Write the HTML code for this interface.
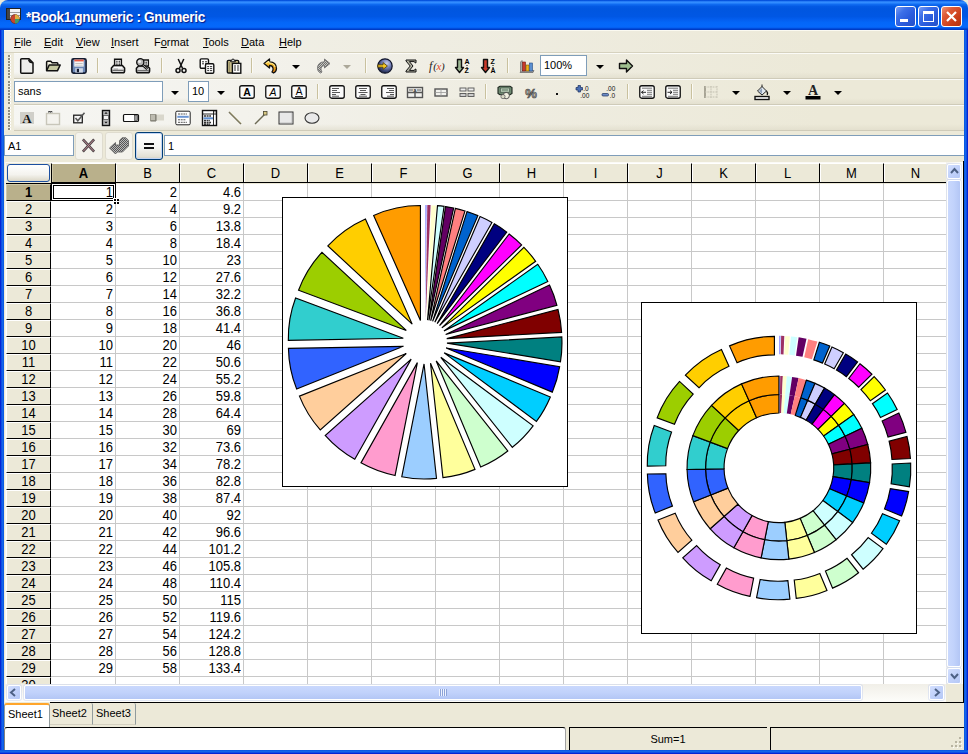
<!DOCTYPE html><html><head><meta charset="utf-8"><title>*Book1.gnumeric : Gnumeric</title><style>
*{box-sizing:border-box;margin:0;padding:0}
html,body{width:968px;height:754px;overflow:hidden;background:#ece9d8}
body{position:relative;font-family:"Liberation Sans","DejaVu Sans",sans-serif;font-size:11px;color:#000}
.a{position:absolute}
#title{left:0;top:0;width:968px;height:30px;border-radius:8px 8px 0 0;
 background:linear-gradient(to bottom,#0046d2 0%,#0b5fe9 3%,#3a92ff 6.5%,#2a86fe 10%,#0f6af0 15%,#0359e3 22%,#0056e0 30%,#0057e4 55%,#035ff0 66%,#0467f9 76%,#0568fb 88%,#0560f2 92%,#004cdc 95%,#003cc6 98%,#0038c0 100%)}
#title .t{left:26px;top:9px;color:#fff;font-weight:bold;font-size:13.6px;line-height:16px;white-space:nowrap;text-shadow:1px 1px 1px #0a1883;letter-spacing:-0.32px;transform:scaleY(1.08);transform-origin:50% 20%}
.bl,.br,.bb{z-index:20}
.bl{left:0;top:30px;width:4px;height:724px;background:linear-gradient(to right,#0019cf 0,#0831d9 25%,#166aee 50%,#0855dd 100%)}
.br{left:964px;top:30px;width:4px;height:724px;background:linear-gradient(to left,#0019cf 0,#0831d9 25%,#166aee 50%,#0855dd 100%)}
.bb{left:0;top:750px;width:968px;height:4px;background:linear-gradient(to top,#0019cf 0,#0831d9 25%,#166aee 50%,#0855dd 100%)}
.wb{top:6px;width:21px;height:21px;border:1px solid #fff;border-radius:3px;background:linear-gradient(135deg,#7a9df5 0%,#3c6fe8 30%,#2b5cdd 60%,#2450c8 100%)}
.wb.x{background:linear-gradient(135deg,#ec9277 0%,#de5a36 30%,#c93c18 70%,#b23312 100%)}
#menu{left:4px;top:30px;width:960px;height:23px;background:linear-gradient(to right,#f2f1e9 0%,#efede2 45%,#ece9d8 85%);border-top:1px solid #fbfaf1;border-bottom:1px solid #d6d2bf}
#menu span{margin-top:-1px}
#menu span{position:absolute;top:6px;font-size:11px;white-space:nowrap}
#menu u{text-decoration:underline}
.tb{left:4px;width:960px;height:26px;background:linear-gradient(to right,#f6f6f3 0%,#f3f2ec 25%,#efede2 50%,#ece9d8 85%);border-top:1px solid #fbfbf7;border-bottom:1px solid #cfcbb9}
.tb i{position:absolute;left:0;top:-1px;width:10px;height:26px;background:#eeebdb}
.tb b{position:absolute;left:0;top:18px;width:960px;height:6px;background:linear-gradient(to bottom,rgba(220,216,198,0),rgba(220,216,198,.55))}
.hd{left:8px;width:3px;background-image:linear-gradient(to right,#8f8d80 0,#8f8d80 2px,transparent 2px),linear-gradient(to right,transparent 1px,#fff 1px);background-size:3px 3px,3px 3px;background-position:0 0,0 1px;background-repeat:repeat-y}
.hd:before{content:"";position:absolute;left:0;top:0;width:3px;height:100%;background-image:linear-gradient(to bottom,transparent 2px,#eeebdb 2px);background-size:3px 3px}
.sep{width:2px;height:16px;border-left:1px solid #c5c2b2;border-right:1px solid #fff}
.ent{background:#fff;border:1px solid #7f9db9}
.ent span{position:absolute;white-space:nowrap}
.dar{width:0;height:0;border-left:4px solid transparent;border-right:4px solid transparent;border-top:4px solid #000}
.dar.g{border-top-color:#aca899}
svg{position:absolute;overflow:visible}
#grid{left:5px;top:162px;width:942px;height:522px;background:#fff;overflow:hidden}
.ch,.rh{position:absolute;background:#ece9d8;text-align:center;font-size:13px;color:#000;overflow:hidden}
.ch span,.rh span{display:inline-block;transform:scaleY(1.1);transform-origin:50% 85%}
.cell{position:absolute;font-size:13px;text-align:right;white-space:nowrap;transform:scaleY(1.1);transform-origin:50% 15%}
</style></head><body>
<div id="title" class="a">
<svg style="left:6px;top:8px" width="16" height="16" viewBox="0 0 16 16"><rect x="0.5" y="0.5" width="14" height="11" fill="#f4f4f4" stroke="#222"/><rect x="1" y="1" width="3" height="10" fill="#444"/><rect x="4" y="4" width="10" height="1" fill="#999"/><rect x="4" y="7" width="10" height="1" fill="#999"/><circle cx="9" cy="11" r="4.5" fill="#c9452e" stroke="#5a2a1a" stroke-width=".6"/><path d="M9 11 L13.5 11 A4.5 4.5 0 0 1 9 15.5Z" fill="#3d9a6a"/><path d="M9 11 L9 6.5 A4.5 4.5 0 0 1 13.5 11Z" fill="#e0b040"/></svg>
<div class="a t">*Book1.gnumeric : Gnumeric</div>
<div class="a wb" style="left:895px"><div class="a" style="left:4px;top:12px;width:8px;height:3px;background:#fff"></div></div>
<div class="a wb" style="left:918px"><div class="a" style="left:4px;top:4px;width:11px;height:11px;border:1px solid #fff;border-top:3px solid #fff"></div></div>
<div class="a wb x" style="left:941px"><svg style="left:4px;top:4px" width="11" height="11" viewBox="0 0 11 11"><path d="M1 1L10 10M10 1L1 10" stroke="#fff" stroke-width="2.2"/></svg></div>
</div>
<div class="a bl"></div><div class="a br"></div><div class="a bb"></div>
<div id="menu" class="a">
<span style="left:10px"><u>F</u>ile</span>
<span style="left:40px"><u>E</u>dit</span>
<span style="left:72px"><u>V</u>iew</span>
<span style="left:107px"><u>I</u>nsert</span>
<span style="left:150px">F<u>o</u>rmat</span>
<span style="left:199px"><u>T</u>ools</span>
<span style="left:237px"><u>D</u>ata</span>
<span style="left:275px"><u>H</u>elp</span>
</div>
<div class="a tb" style="top:53px"><b></b><i></i></div>
<div class="a hd" style="top:55px;height:24px"></div>
<div class="a tb" style="top:79px"><b></b><i></i></div>
<div class="a hd" style="top:81px;height:24px"></div>
<div class="a tb" style="top:105px"><b></b><i></i></div>
<div class="a hd" style="top:107px;height:24px"></div>
<svg style="left:19px;top:58px" width="16" height="16" viewBox="0 0 16 16"><g stroke-width="1.4"><path d="M2.7 0.8H10L14 4.8V14.2Q14 15.2 13 15.2H2.7Q1.7 15.2 1.7 14.2V1.8Q1.7 .8 2.7 .8Z" fill="#f1f1ef" stroke="#111" stroke-width="1.5" stroke-linejoin="round"/><path d="M9.5 1.5Q10.5 4.8 13.5 5.2" fill="none" stroke="#111" stroke-width="1.6"/><path d="M3 2H9L9.5 4.5L13 5.5V14H3Z" fill="#ededeb" stroke="none"/></g></svg>
<svg style="left:45px;top:58px" width="16" height="16" viewBox="0 0 16 16"><g stroke-width="1.4"><path d="M1.6 12.5V4.2Q1.6 3.2 2.6 3.2H5.8L7.2 4.8H12Q12.8 4.8 12.8 5.6V6.8" fill="#f1efdd" stroke="#111" stroke-width="1.5" stroke-linejoin="round"/><path d="M1.6 12.8L4.2 7H15.2L12.4 12.8Z" fill="#c5c8a0" stroke="#111" stroke-width="1.5" stroke-linejoin="round"/></g></svg>
<svg style="left:71px;top:58px" width="16" height="16" viewBox="0 0 16 16"><g stroke-width="1.4"><rect x="0.9" y="0.9" width="14.2" height="14.2" rx="1.6" fill="#6c88b6" stroke="#141c30" stroke-width="1.6"/><rect x="3.3" y="1.6" width="9.4" height="7" fill="#f4f4f4"/><rect x="3.3" y="1.6" width="9.4" height="1.8" fill="#e85a44"/><rect x="4.3" y="5" width="7.4" height=".8" fill="#b4b4b4"/><rect x="4.3" y="6.8" width="7.4" height=".8" fill="#c8c8c8"/><rect x="4.3" y="10.2" width="7.6" height="4.4" fill="#cfd8e8"/><rect x="5.8" y="10.8" width="2.2" height="3.4" fill="#141c30"/></g></svg>
<svg style="left:110px;top:58px" width="16" height="16" viewBox="0 0 16 16"><g stroke-width="1.4"><path d="M4.6 8V1.3H11.4V8" fill="#fff" stroke="#111" stroke-width="1.4"/><path d="M6.2 3.3H7.6M8.6 3.3H10M6.2 5H7.6M8.6 5H10M6.2 6.7H7.6M8.6 6.7H10" stroke="#111" stroke-width="1.1"/><path d="M1.4 13V10L3.6 7.6H12.4L14.6 10V13Q14.6 14.8 12.8 14.8H3.2Q1.4 14.8 1.4 13Z" fill="#dedede" stroke="#111" stroke-width="1.5"/><path d="M2.2 12.4H13.8" stroke="#6f6f6f" stroke-width="1.3"/><path d="M4 9.8H12" stroke="#fff"/><path d="M4.5 11H5.5M6.5 11H7.5" stroke="#444" stroke-width=".8"/></g></svg>
<svg style="left:135px;top:58px" width="16" height="16" viewBox="0 0 16 16"><g stroke-width="1.4"><path d="M8.5 8V2H13.4V8" fill="#fff" stroke="#111" stroke-width="1.3"/><path d="M10.3 4.2H12M10.3 6H12" stroke="#111" stroke-width="1"/><path d="M1.4 13V10.3L3.6 8H12.4L14.6 10.3V13Q14.6 14.8 12.8 14.8H3.2Q1.4 14.8 1.4 13Z" fill="#d4d4d4" stroke="#111" stroke-width="1.5"/><path d="M2.2 12.6H13.8" stroke="#6f6f6f" stroke-width="1.3"/><path d="M4.5 11H5.5M6.5 11H7.5" stroke="#fff" stroke-width=".9"/><path d="M7.5 6.8L12.3 11" stroke="#111" stroke-width="2.6"/><path d="M7.8 7L12 10.7" stroke="#999" stroke-width="1"/><circle cx="5.3" cy="4.3" r="3.6" fill="#b4b4b4" stroke="#111" stroke-width="1.3"/><circle cx="4.5" cy="3.5" r="1.6" fill="#ececec"/></g></svg>
<svg style="left:172.5px;top:58px" width="16" height="16" viewBox="0 0 16 16"><g stroke-width="1.4"><path d="M5.2 1L9.6 10.5M10.8 1L6.4 10.5" stroke="#111" stroke-width="1.5" fill="none"/><circle cx="5" cy="12.6" r="2" fill="none" stroke="#111" stroke-width="1.5"/><circle cx="11" cy="12.6" r="2" fill="none" stroke="#111" stroke-width="1.5"/></g></svg>
<svg style="left:198.5px;top:58px" width="16" height="16" viewBox="0 0 16 16"><g stroke-width="1.4"><rect x="1.2" y="0.9" width="8.3" height="9.4" rx="1.2" fill="#fff" stroke="#111" stroke-width="1.4"/><path d="M3 3.8H5M6 3.8H8M3 5.8H5M6 5.8H8" stroke="#333" stroke-width="1"/><rect x="6.5" y="5.8" width="8.3" height="9.4" rx="1.2" fill="#fff" stroke="#111" stroke-width="1.4"/><path d="M8.2 8.6H10.2M11 8.6H13.2M8.2 10.6H10.2M11 10.6H13.2M8.2 12.6H10.2M11 12.6H13.2" stroke="#333" stroke-width="1"/></g></svg>
<svg style="left:225.5px;top:58px" width="16" height="16" viewBox="0 0 16 16"><g stroke-width="1.4"><rect x="1.3" y="2.4" width="11.4" height="12.6" rx="1.2" fill="#c8bc8a" stroke="#111" stroke-width="1.4"/><path d="M3.3 4V14" stroke="#8a8056" stroke-width="1.4"/><path d="M3.3 4.5V13.5" stroke="#e9e0b8" stroke-width=".5" stroke-dasharray="1 1"/><path d="M4.6 3.8L5.4 2Q7 -.2 8.6 2L9.4 3.8Z" fill="#cfcfcf" stroke="#111" stroke-width="1"/><rect x="6.4" y="5.4" width="8.4" height="9.8" fill="#fff" stroke="#111" stroke-width="1.4"/><path d="M8 8H10M11 8H13.2M8 10H10M11 10H13.2M8 12H10M11 12H13.2" stroke="#333" stroke-width="1"/></g></svg>
<svg style="left:262px;top:58px" width="16" height="16" viewBox="0 0 16 16"><g stroke-width="1.4"><defs><linearGradient id="ug" x1="0" y1="0" x2="0" y2="1"><stop offset="0" stop-color="#fde466"/><stop offset=".45" stop-color="#f3b322"/><stop offset="1" stop-color="#d97a10"/></linearGradient></defs><path d="M2 5.5L7.5 1V3.8Q14.5 4 14.5 10.5Q14.5 13.5 11.5 15L10 14Q11.5 12 11 10Q10.5 7.6 7.5 7.5V10Z" fill="url(#ug)" stroke="#111" stroke-width="1.3" stroke-linejoin="round"/><path d="M4 5.3L7 3.2V5Q12.3 5 13 9" fill="none" stroke="#fff3b0" stroke-width=".9"/></g></svg>
<svg style="left:315px;top:58px" width="16" height="16" viewBox="0 0 16 16"><g stroke-width="1.4"><defs><pattern id="dth2" width="2" height="2" patternUnits="userSpaceOnUse"><rect width="2" height="2" fill="#c6c6c0"/><rect width="1" height="1" fill="#6e6e6e"/><rect x="1" y="1" width="1" height="1" fill="#6e6e6e"/></pattern></defs><path d="M15 5.5L9.5 1V3.8Q2.5 4 2.5 10.5Q2.5 13.5 5.5 15L7 14Q5.5 12 6 10Q6.5 7.6 9.5 7.5V10Z" fill="url(#dth2)" stroke="#777" stroke-width="1" stroke-linejoin="round"/></g></svg>
<svg style="left:376.5px;top:58px" width="16" height="16" viewBox="0 0 16 16"><g stroke-width="1.4"><defs><radialGradient id="gl" cx=".62" cy=".32" r=".75"><stop offset="0" stop-color="#c9d0ec"/><stop offset=".35" stop-color="#7f8abf"/><stop offset=".7" stop-color="#3d4878"/><stop offset="1" stop-color="#161b33"/></radialGradient></defs><circle cx="8" cy="8" r="7.2" fill="url(#gl)" stroke="#10142a" stroke-width="1.2"/><path d="M.8 6.8H6V4.6L10.4 8L6 11.4V9.2H.8Z" fill="#f4c624" stroke="#4a3a06" stroke-width=".8" stroke-linejoin="round"/></g></svg>
<svg style="left:402.5px;top:58px" width="16" height="16" viewBox="0 0 16 16"><g stroke-width="1.4"><path d="M3 2H13V4.8H12L11.4 3.6H6.4L10 8L6.4 12.4H11.4L12 11.2H13V14H3V13L7.2 8L3 3Z" fill="#b4b4a4" stroke="#111" stroke-width="1" stroke-linejoin="round"/></g></svg>
<svg style="left:429px;top:58px" width="16" height="16" viewBox="0 0 16 16"><g stroke-width="1.4"><text x="0" y="12" font-family="Liberation Serif,serif" font-style="italic" font-size="12" fill="#222">f</text><text x="4.2" y="12" font-family="Liberation Serif,serif" font-style="italic" font-size="11" fill="#222">(</text><text x="7.4" y="12" font-family="Liberation Serif,serif" font-style="italic" font-size="11" fill="#e2442c">x</text><text x="12" y="12" font-family="Liberation Serif,serif" font-style="italic" font-size="11" fill="#222">)</text></g></svg>
<svg style="left:455px;top:58px" width="16" height="16" viewBox="0 0 16 16"><g stroke-width="1.4"><path d="M2.5 1.5H6.5V9.5H8.5L4.5 14.5L0.5 9.5H2.5Z" fill="#9db894" stroke="#111" stroke-linejoin="round"/><text x="9.5" y="6" font-family="Liberation Sans,sans-serif" font-weight="bold" font-size="7" fill="#000">A</text><text x="9.5" y="15" font-family="Liberation Sans,sans-serif" font-weight="bold" font-size="7" fill="#000">Z</text><rect x="11.5" y="7" width="1" height="1" fill="#000"/><rect x="11.5" y="9" width="1" height="1" fill="#000"/></g></svg>
<svg style="left:481px;top:58px" width="16" height="16" viewBox="0 0 16 16"><g stroke-width="1.4"><path d="M2.5 1.5H6.5V9.5H8.5L4.5 14.5L0.5 9.5H2.5Z" fill="#c8392b" stroke="#111" stroke-linejoin="round"/><text x="9.5" y="6" font-family="Liberation Sans,sans-serif" font-weight="bold" font-size="7" fill="#000">Z</text><text x="9.5" y="15" font-family="Liberation Sans,sans-serif" font-weight="bold" font-size="7" fill="#000">A</text><rect x="11.5" y="7" width="1" height="1" fill="#000"/><rect x="11.5" y="9" width="1" height="1" fill="#000"/></g></svg>
<svg style="left:518.5px;top:58px" width="16" height="16" viewBox="0 0 16 16"><g stroke-width="1.4"><path d="M1 14.5L3 12.5H15L14 14.5Z" fill="#9c9c9c" stroke="#555" stroke-width=".6"/><path d="M1.5 14V4L3 2.5V12.5" fill="#ccc" stroke="#666" stroke-width=".7"/><rect x="3.5" y="4" width="3" height="9" fill="#c8392b" stroke="#6b1a12" stroke-width=".6"/><rect x="7" y="7" width="3" height="6" fill="#f0b41c" stroke="#7c5a08" stroke-width=".6"/><rect x="10.5" y="5" width="3" height="8" fill="#5b8fd0" stroke="#234a82" stroke-width=".6"/></g></svg>
<svg style="left:617.5px;top:58px" width="16" height="16" viewBox="0 0 16 16"><g stroke-width="1.4"><path d="M1.5 5.5H8.5V2L14.5 8L8.5 14V10.5H1.5Z" fill="#9fbf8f" stroke="#111" stroke-linejoin="round"/></g></svg>
<div class="a" style="left:97px;top:58px;width:2px;height:15px;border-left:1px solid #c9c19e;border-right:1px solid #fbfaf5"></div>
<div class="a" style="left:161px;top:58px;width:2px;height:15px;border-left:1px solid #c9c19e;border-right:1px solid #fbfaf5"></div>
<div class="a" style="left:251px;top:58px;width:2px;height:15px;border-left:1px solid #c9c19e;border-right:1px solid #fbfaf5"></div>
<div class="a" style="left:365px;top:58px;width:2px;height:15px;border-left:1px solid #c9c19e;border-right:1px solid #fbfaf5"></div>
<div class="a" style="left:507px;top:58px;width:2px;height:15px;border-left:1px solid #c9c19e;border-right:1px solid #fbfaf5"></div>
<div class="a dar" style="left:292px;top:65px"></div>
<div class="a dar g" style="left:343px;top:65px"></div>
<div class="a dar" style="left:596px;top:65px"></div>
<div class="a ent" style="left:540px;top:55px;width:47px;height:21px"><span style="left:3px;top:3px">100%</span></div>
<div class="a ent" style="left:14px;top:81px;width:149px;height:21px"><span style="left:3px;top:3px">sans</span></div>
<div class="a dar" style="left:171px;top:91px"></div>
<div class="a ent" style="left:188px;top:81px;width:21px;height:21px"><span style="left:3px;top:3px">10</span></div>
<div class="a dar" style="left:217px;top:91px"></div>
<svg style="left:239px;top:84px" width="16" height="16" viewBox="0 0 16 16"><g stroke-width="1.4"><rect x="0.75" y="1.75" width="14.5" height="12.5" rx="2" fill="#fbfbfb" stroke="#111" stroke-width="1.3"/><text x="8" y="12" text-anchor="middle" font-family="Liberation Sans,sans-serif" font-weight="bold" font-size="10.5" fill="#000">A</text></g></svg>
<svg style="left:265px;top:84px" width="16" height="16" viewBox="0 0 16 16"><g stroke-width="1.4"><rect x="0.75" y="1.75" width="14.5" height="12.5" rx="2" fill="#fbfbfb" stroke="#111" stroke-width="1.3"/><text x="8" y="12" text-anchor="middle" font-family="Liberation Sans,sans-serif" font-style="italic" font-size="10.5" fill="#000">A</text></g></svg>
<svg style="left:291px;top:84px" width="16" height="16" viewBox="0 0 16 16"><g stroke-width="1.4"><rect x="0.75" y="1.75" width="14.5" height="12.5" rx="2" fill="#fbfbfb" stroke="#111" stroke-width="1.3"/><text x="8" y="11.3" text-anchor="middle" font-family="Liberation Sans,sans-serif" font-size="10" fill="#000">A</text><path d="M4 12.7H12" stroke="#000" stroke-width="1"/></g></svg>
<svg style="left:329px;top:84px" width="16" height="16" viewBox="0 0 16 16"><g stroke-width="1.4"><rect x="0.75" y="1.75" width="14.5" height="12.5" rx="2" fill="#fbfbfb" stroke="#111" stroke-width="1.3"/><path d="M3 4.5H10M3 6.5H8M3 8.5H11M3 10.5H7M3 12.2H10" stroke="#444" stroke-width=".9"/></g></svg>
<svg style="left:355px;top:84px" width="16" height="16" viewBox="0 0 16 16"><g stroke-width="1.4"><rect x="0.75" y="1.75" width="14.5" height="12.5" rx="2" fill="#fbfbfb" stroke="#111" stroke-width="1.3"/><path d="M4 4.5H12M5 6.5H11M3.5 8.5H12.5M5.5 10.5H10.5M4 12.2H12" stroke="#444" stroke-width=".9"/></g></svg>
<svg style="left:381px;top:84px" width="16" height="16" viewBox="0 0 16 16"><g stroke-width="1.4"><rect x="0.75" y="1.75" width="14.5" height="12.5" rx="2" fill="#fbfbfb" stroke="#111" stroke-width="1.3"/><path d="M6 4.5H13M8 6.5H13M5 8.5H13M9 10.5H13M6 12.2H13" stroke="#444" stroke-width=".9"/></g></svg>
<svg style="left:407px;top:84px" width="16" height="16" viewBox="0 0 16 16"><g stroke-width="1.4"><rect x="0.5" y="3.5" width="15" height="10" fill="#f2f2ee" stroke="#555"/><path d="M.5 8.5H15.5M8 8.5V13.5" stroke="#555"/><path d="M2 6H6M10 6H14" stroke="#333" stroke-width=".8"/><text x="8" y="7.8" text-anchor="middle" font-family="Liberation Sans,sans-serif" font-weight="bold" font-size="5" fill="#222">a</text></g></svg>
<svg style="left:432.5px;top:84px" width="16" height="16" viewBox="0 0 16 16"><g stroke-width="1.4"><rect x="2" y="5" width="12" height="7" fill="#f2f2ee" stroke="#555"/><path d="M2 8.5H14M8 5V12" stroke="#999" stroke-width=".8"/></g></svg>
<svg style="left:459px;top:84px" width="16" height="16" viewBox="0 0 16 16"><g stroke-width="1.4"><rect x="1" y="4" width="6" height="3" fill="#eee" stroke="#555" stroke-width=".9"/><rect x="9" y="4" width="6" height="3" fill="#eee" stroke="#555" stroke-width=".9"/><rect x="1" y="9.5" width="6" height="3" fill="#ccc" stroke="#555" stroke-width=".9"/><rect x="9" y="9.5" width="6" height="3" fill="#ccc" stroke="#555" stroke-width=".9"/></g></svg>
<svg style="left:496.5px;top:84px" width="16" height="16" viewBox="0 0 16 16"><g stroke-width="1.4"><path d="M1 3.5L3 2.2H13L15 3.5V9.5L13 10.8H3L1 9.5Z" fill="#6f8a72" stroke="#1c261e" stroke-width="1.1"/><rect x="3.3" y="4" width="9.4" height="4.2" fill="#b4c8b2" stroke="#3a4c3e" stroke-width=".6"/><path d="M5 6H11" stroke="#5d7762" stroke-width="1"/><circle cx="9.2" cy="11.6" r="3.2" fill="#f0f0e0" stroke="#444" stroke-width=".9"/><circle cx="6" cy="12.6" r="2.1" fill="#dadac6" stroke="#555" stroke-width=".7"/></g></svg>
<svg style="left:522.5px;top:84px" width="16" height="16" viewBox="0 0 16 16"><g stroke-width="1.4"><text x="8" y="13.5" text-anchor="middle" font-family="Liberation Sans,sans-serif" font-weight="bold" font-size="13" fill="#d0d0c4" stroke="#444" stroke-width=".7">%</text></g></svg>
<svg style="left:548.5px;top:84px" width="16" height="16" viewBox="0 0 16 16"><g stroke-width="1.4"><rect x="7" y="9" width="2" height="2" fill="#111"/></g></svg>
<svg style="left:575px;top:84px" width="16" height="16" viewBox="0 0 16 16"><g stroke-width="1.4"><path d="M3 1.5H5.5V3.5H7.5V6H5.5V8H3V6H1V3.5H3Z" fill="#4a6fb4" stroke="#1b2f5c" stroke-width=".7"/><text x="8.2" y="7" font-family="Liberation Sans,sans-serif" font-size="6.5" fill="#111">.0</text><text x="5.3" y="14" font-family="Liberation Sans,sans-serif" font-size="6.5" fill="#111">.00</text></g></svg>
<svg style="left:600.5px;top:84px" width="16" height="16" viewBox="0 0 16 16"><g stroke-width="1.4"><rect x="1" y="9.5" width="6.5" height="2.5" rx="1" fill="#6d8cc6" stroke="#1b2f5c" stroke-width=".7"/><text x="5.3" y="6.5" font-family="Liberation Sans,sans-serif" font-size="6.5" fill="#111">.00</text><text x="8.8" y="14" font-family="Liberation Sans,sans-serif" font-size="6.5" fill="#111">.0</text></g></svg>
<svg style="left:639px;top:84px" width="16" height="16" viewBox="0 0 16 16"><g stroke-width="1.4"><rect x="0.75" y="1.75" width="14.5" height="12.5" rx="2" fill="#fbfbfb" stroke="#111" stroke-width="1.3"/><path d="M3 4.2H13M8 6.3H13M8 8.3H13M8 10.3H13M3 12.3H13" stroke="#555" stroke-width=".8"/><path d="M2.5 8.3H7M2.5 8.3L4.5 6.6M2.5 8.3L4.5 10" stroke="#111" stroke-width=".9" fill="none"/></g></svg>
<svg style="left:665px;top:84px" width="16" height="16" viewBox="0 0 16 16"><g stroke-width="1.4"><rect x="0.75" y="1.75" width="14.5" height="12.5" rx="2" fill="#fbfbfb" stroke="#111" stroke-width="1.3"/><path d="M3 4.2H13M8 6.3H13M8 8.3H13M8 10.3H13M3 12.3H13" stroke="#555" stroke-width=".8"/><path d="M2.5 8.3H7M7 8.3L5 6.6M7 8.3L5 10" stroke="#111" stroke-width=".9" fill="none"/></g></svg>
<svg style="left:703px;top:84px" width="16" height="16" viewBox="0 0 16 16"><g stroke-width="1.4"><path d="M2 2V14" stroke="#a8a596" stroke-width="2"/><path d="M2 3H14M2 8H14M2 13H14M8 2V14M14 2V14" stroke="#c2bfb0" stroke-width="1" stroke-dasharray="1 .6"/></g></svg>
<svg style="left:754px;top:84px" width="16" height="16" viewBox="0 0 16 16"><g stroke-width="1.4"><path d="M8 0.5V5" stroke="#111" stroke-width=".9"/><path d="M8 2.5L12.5 7L8 11L3.5 7Z" fill="#dfe6ee" stroke="#111" stroke-width=".9"/><path d="M5 7L8 4L8 10Z" fill="#8ea0b8"/><path d="M12.5 7Q14 8.5 13.2 11" fill="none" stroke="#111" stroke-width="1.2"/><rect x="1" y="12.5" width="14" height="3" fill="#fff" stroke="#111"/></g></svg>
<svg style="left:805px;top:84px" width="16" height="16" viewBox="0 0 16 16"><g stroke-width="1.4"><text x="8" y="11" text-anchor="middle" font-family="Liberation Serif,serif" font-weight="bold" font-size="14" fill="#222">A</text><rect x="0.5" y="12" width="15" height="3.5" fill="#000"/></g></svg>
<div class="a" style="left:317px;top:84px;width:2px;height:15px;border-left:1px solid #c9c19e;border-right:1px solid #fbfaf5"></div>
<div class="a" style="left:485px;top:84px;width:2px;height:15px;border-left:1px solid #c9c19e;border-right:1px solid #fbfaf5"></div>
<div class="a" style="left:627px;top:84px;width:2px;height:15px;border-left:1px solid #c9c19e;border-right:1px solid #fbfaf5"></div>
<div class="a" style="left:691px;top:84px;width:2px;height:15px;border-left:1px solid #c9c19e;border-right:1px solid #fbfaf5"></div>
<div class="a dar" style="left:732px;top:91px"></div>
<div class="a dar" style="left:783px;top:91px"></div>
<div class="a dar" style="left:834px;top:91px"></div>
<svg style="left:19px;top:110px" width="16" height="16" viewBox="0 0 16 16"><g stroke-width="1.4"><rect x="1" y="2" width="14" height="12" fill="#d0cfc9"/><text x="8" y="13" text-anchor="middle" font-family="Liberation Serif,serif" font-weight="bold" font-size="13" fill="#111">A</text></g></svg>
<svg style="left:45px;top:110px" width="16" height="16" viewBox="0 0 16 16"><g stroke-width="1.4"><rect x="1.5" y="3.5" width="13" height="11" fill="#f4f3ee" stroke="#c8c6ba"/><path d="M3.5 2.5V1.5H5V2.5M5.5 2.5V1.5H7V2.5" stroke="#222" stroke-width=".8" fill="none"/></g></svg>
<svg style="left:71px;top:110px" width="16" height="16" viewBox="0 0 16 16"><g stroke-width="1.4"><rect x="2.7" y="5.2" width="8.6" height="7.6" fill="#f6f6f6" stroke="#222" stroke-width="1.3"/><path d="M4.5 8L6.8 10.8L13.5 2.8" fill="none" stroke="#555" stroke-width="1.5"/></g></svg>
<svg style="left:97.5px;top:110px" width="16" height="16" viewBox="0 0 16 16"><g stroke-width="1.4"><rect x="4.5" y="0.5" width="7" height="15" fill="#bdbdbd" stroke="#111"/><rect x="5.5" y="5.5" width="5" height="4" fill="#f4f4f4" stroke="#444" stroke-width=".7"/><path d="M6.3 3.8L8 2L9.7 3.8Z M6.3 11.7L8 13.5L9.7 11.7Z" fill="#111"/></g></svg>
<svg style="left:122.5px;top:110px" width="16" height="16" viewBox="0 0 16 16"><g stroke-width="1.4"><rect x="0.5" y="4.5" width="15" height="7" rx="1" fill="#fff" stroke="#111" stroke-width="1.2"/><rect x="11.5" y="5.5" width="3" height="5" fill="#999" stroke="#333" stroke-width=".6"/></g></svg>
<svg style="left:149px;top:110px" width="16" height="16" viewBox="0 0 16 16"><g stroke-width="1.4"><rect x="1" y="4.5" width="14" height="6" fill="#d9d7cc"/><rect x="1.5" y="4.5" width="5" height="6" fill="#bdbbb0" stroke="#8e8c80" stroke-width=".8"/><path d="M1.5 11H7V4.5" fill="none" stroke="#77756a" stroke-width="1"/></g></svg>
<svg style="left:175px;top:110px" width="16" height="16" viewBox="0 0 16 16"><g stroke-width="1.4"><rect x="0.8" y="1.2" width="14.4" height="13.6" rx="1.2" fill="#fff" stroke="#222" stroke-width="1"/><path d="M3 4H12M3 9.8H11M3 12.3H12" stroke="#555" stroke-width="1" stroke-dasharray="2 .7"/><rect x="2.3" y="5.8" width="11.4" height="2" fill="#6a95d4"/></g></svg>
<svg style="left:201px;top:110px" width="16" height="16" viewBox="0 0 16 16"><g stroke-width="1.4"><rect x="1.5" y="0.5" width="14" height="15" fill="#fff" stroke="#111"/><path d="M1.5 4H15.5M12.5 .5V15.5" stroke="#111" stroke-width=".9"/><path d="M3 6H10M3 10.5H9M3 12.5H10M3 14.3H9" stroke="#333" stroke-dasharray="2 .6"/><rect x="2.5" y="7.3" width="9.5" height="2" fill="#5f8fd0"/><path d="M13.2 1.5L14 2.8L14.8 1.5Z" fill="#111"/></g></svg>
<svg style="left:227px;top:110px" width="16" height="16" viewBox="0 0 16 16"><g stroke-width="1.4"><path d="M2 2L14 14" stroke="#6d6a55" stroke-width="1.5"/><path d="M2.5 1.8L14.2 13.5" stroke="#c8bf8e" stroke-width=".6"/></g></svg>
<svg style="left:253px;top:110px" width="16" height="16" viewBox="0 0 16 16"><g stroke-width="1.4"><path d="M2 14L12 4" stroke="#6d6a55" stroke-width="1.5"/><rect x="10.5" y="1.5" width="3.5" height="3.5" fill="#d8c884" stroke="#4a4630" stroke-width=".8"/></g></svg>
<svg style="left:278px;top:110px" width="16" height="16" viewBox="0 0 16 16"><g stroke-width="1.4"><rect x="1" y="2" width="14" height="12" fill="#e8e8e8" stroke="#333" stroke-width="1"/><path d="M2 13.2H14.2V3" fill="none" stroke="#9a9a9a" stroke-width=".8"/></g></svg>
<svg style="left:304px;top:110px" width="16" height="16" viewBox="0 0 16 16"><g stroke-width="1.4"><ellipse cx="8" cy="8" rx="7" ry="5.3" fill="#e9e9e9" stroke="#333" stroke-width="1.1"/></g></svg>
<div class="a" style="left:4px;top:131px;width:960px;height:31px;background:#ece9d8"></div>
<div class="a ent" style="left:4px;top:135px;width:70px;height:21px"><span style="left:3px;top:4px">A1</span></div>
<div class="a ent" style="left:164px;top:135px;width:803px;height:21px"><span style="left:3px;top:4px">1</span></div>
<div class="a" style="left:75px;top:132px;width:28px;height:28px;border:1px solid #dfdccf;border-radius:3px;background:#f4f3ec"><svg style="left:5px;top:5px" width="15" height="15" viewBox="0 0 16 16"><path d="M2 1.5L14 14.5M14 1.5L2 14.5" stroke="#4e4648" stroke-width="2.8"/><path d="M2.5 2L13.5 14M13.5 2L2.5 14" stroke="#c08a94" stroke-width="1"/></svg></div>
<div class="a" style="left:105px;top:132px;width:28px;height:28px;border:1px solid #dfdccf;border-radius:3px;background:#f4f3ec"><svg style="left:3px;top:4px" width="20" height="18" viewBox="0 0 20 18"><defs><pattern id="dth" width="2" height="2" patternUnits="userSpaceOnUse"><rect width="2" height="2" fill="#b8b8b8"/><rect width="1" height="1" fill="#555"/><rect x="1" y="1" width="1" height="1" fill="#555"/></pattern></defs><path d="M0.5 11L6.5 5.5V8H10.5V3.5L13 .8H17L19.5 3.5V9L13.5 15H8L6.5 17Z" fill="url(#dth)" stroke="#666" stroke-width=".9"/></svg></div>
<div class="a" style="left:135px;top:132px;width:28px;height:28px;border:1px solid #003c74;border-radius:3px;background:linear-gradient(to bottom,#fff 0%,#f6f6f2 55%,#e3e1d6 90%,#d0cdbf 100%);box-shadow:inset 0 0 0 1px #c2d5f5"><div class="a" style="left:8px;top:10px;width:10px;height:2px;background:#111"></div><div class="a" style="left:8px;top:14px;width:10px;height:2px;background:#111"></div></div>
<div id="grid" class="a">
<div class="a" style="left:0;top:0;width:942px;height:22px;background:#ece9d8"></div>
<div class="a" style="left:0;top:0;width:46px;height:523px;background:#ece9d8"></div>
<div class="a" style="left:110px;top:21px;width:1px;height:502px;background:#c8c8c8"></div>
<div class="a" style="left:174px;top:21px;width:1px;height:502px;background:#c8c8c8"></div>
<div class="a" style="left:238px;top:21px;width:1px;height:502px;background:#c8c8c8"></div>
<div class="a" style="left:302px;top:21px;width:1px;height:502px;background:#c8c8c8"></div>
<div class="a" style="left:366px;top:21px;width:1px;height:502px;background:#c8c8c8"></div>
<div class="a" style="left:430px;top:21px;width:1px;height:502px;background:#c8c8c8"></div>
<div class="a" style="left:494px;top:21px;width:1px;height:502px;background:#c8c8c8"></div>
<div class="a" style="left:558px;top:21px;width:1px;height:502px;background:#c8c8c8"></div>
<div class="a" style="left:622px;top:21px;width:1px;height:502px;background:#c8c8c8"></div>
<div class="a" style="left:686px;top:21px;width:1px;height:502px;background:#c8c8c8"></div>
<div class="a" style="left:750px;top:21px;width:1px;height:502px;background:#c8c8c8"></div>
<div class="a" style="left:814px;top:21px;width:1px;height:502px;background:#c8c8c8"></div>
<div class="a" style="left:878px;top:21px;width:1px;height:502px;background:#c8c8c8"></div>
<div class="a" style="left:942px;top:21px;width:1px;height:502px;background:#c8c8c8"></div>
<div class="a" style="left:46px;top:38px;width:895px;height:1px;background:#c8c8c8"></div>
<div class="a" style="left:46px;top:55px;width:895px;height:1px;background:#c8c8c8"></div>
<div class="a" style="left:46px;top:72px;width:895px;height:1px;background:#c8c8c8"></div>
<div class="a" style="left:46px;top:89px;width:895px;height:1px;background:#c8c8c8"></div>
<div class="a" style="left:46px;top:106px;width:895px;height:1px;background:#c8c8c8"></div>
<div class="a" style="left:46px;top:123px;width:895px;height:1px;background:#c8c8c8"></div>
<div class="a" style="left:46px;top:140px;width:895px;height:1px;background:#c8c8c8"></div>
<div class="a" style="left:46px;top:157px;width:895px;height:1px;background:#c8c8c8"></div>
<div class="a" style="left:46px;top:174px;width:895px;height:1px;background:#c8c8c8"></div>
<div class="a" style="left:46px;top:191px;width:895px;height:1px;background:#c8c8c8"></div>
<div class="a" style="left:46px;top:208px;width:895px;height:1px;background:#c8c8c8"></div>
<div class="a" style="left:46px;top:225px;width:895px;height:1px;background:#c8c8c8"></div>
<div class="a" style="left:46px;top:242px;width:895px;height:1px;background:#c8c8c8"></div>
<div class="a" style="left:46px;top:259px;width:895px;height:1px;background:#c8c8c8"></div>
<div class="a" style="left:46px;top:276px;width:895px;height:1px;background:#c8c8c8"></div>
<div class="a" style="left:46px;top:293px;width:895px;height:1px;background:#c8c8c8"></div>
<div class="a" style="left:46px;top:310px;width:895px;height:1px;background:#c8c8c8"></div>
<div class="a" style="left:46px;top:327px;width:895px;height:1px;background:#c8c8c8"></div>
<div class="a" style="left:46px;top:344px;width:895px;height:1px;background:#c8c8c8"></div>
<div class="a" style="left:46px;top:361px;width:895px;height:1px;background:#c8c8c8"></div>
<div class="a" style="left:46px;top:378px;width:895px;height:1px;background:#c8c8c8"></div>
<div class="a" style="left:46px;top:395px;width:895px;height:1px;background:#c8c8c8"></div>
<div class="a" style="left:46px;top:412px;width:895px;height:1px;background:#c8c8c8"></div>
<div class="a" style="left:46px;top:429px;width:895px;height:1px;background:#c8c8c8"></div>
<div class="a" style="left:46px;top:446px;width:895px;height:1px;background:#c8c8c8"></div>
<div class="a" style="left:46px;top:463px;width:895px;height:1px;background:#c8c8c8"></div>
<div class="a" style="left:46px;top:480px;width:895px;height:1px;background:#c8c8c8"></div>
<div class="a" style="left:46px;top:497px;width:895px;height:1px;background:#c8c8c8"></div>
<div class="a" style="left:46px;top:514px;width:895px;height:1px;background:#c8c8c8"></div>
<div class="a" style="left:46px;top:531px;width:895px;height:1px;background:#c8c8c8"></div>
<div class="ch" style="left:46px;top:1px;width:64px;height:20px;background:#b9b08b;font-weight:bold;border-left:1px solid #000;border-bottom:1px solid #000;border-top:1px solid #fff;line-height:19px"><span>A</span></div>
<div class="ch" style="left:110px;top:1px;width:64px;height:20px;background:#ece9d8;font-weight:normal;border-left:1px solid #000;border-bottom:1px solid #000;border-top:1px solid #fff;line-height:19px"><span>B</span></div>
<div class="ch" style="left:174px;top:1px;width:64px;height:20px;background:#ece9d8;font-weight:normal;border-left:1px solid #000;border-bottom:1px solid #000;border-top:1px solid #fff;line-height:19px"><span>C</span></div>
<div class="ch" style="left:238px;top:1px;width:64px;height:20px;background:#ece9d8;font-weight:normal;border-left:1px solid #000;border-bottom:1px solid #000;border-top:1px solid #fff;line-height:19px"><span>D</span></div>
<div class="ch" style="left:302px;top:1px;width:64px;height:20px;background:#ece9d8;font-weight:normal;border-left:1px solid #000;border-bottom:1px solid #000;border-top:1px solid #fff;line-height:19px"><span>E</span></div>
<div class="ch" style="left:366px;top:1px;width:64px;height:20px;background:#ece9d8;font-weight:normal;border-left:1px solid #000;border-bottom:1px solid #000;border-top:1px solid #fff;line-height:19px"><span>F</span></div>
<div class="ch" style="left:430px;top:1px;width:64px;height:20px;background:#ece9d8;font-weight:normal;border-left:1px solid #000;border-bottom:1px solid #000;border-top:1px solid #fff;line-height:19px"><span>G</span></div>
<div class="ch" style="left:494px;top:1px;width:64px;height:20px;background:#ece9d8;font-weight:normal;border-left:1px solid #000;border-bottom:1px solid #000;border-top:1px solid #fff;line-height:19px"><span>H</span></div>
<div class="ch" style="left:558px;top:1px;width:64px;height:20px;background:#ece9d8;font-weight:normal;border-left:1px solid #000;border-bottom:1px solid #000;border-top:1px solid #fff;line-height:19px"><span>I</span></div>
<div class="ch" style="left:622px;top:1px;width:64px;height:20px;background:#ece9d8;font-weight:normal;border-left:1px solid #000;border-bottom:1px solid #000;border-top:1px solid #fff;line-height:19px"><span>J</span></div>
<div class="ch" style="left:686px;top:1px;width:64px;height:20px;background:#ece9d8;font-weight:normal;border-left:1px solid #000;border-bottom:1px solid #000;border-top:1px solid #fff;line-height:19px"><span>K</span></div>
<div class="ch" style="left:750px;top:1px;width:64px;height:20px;background:#ece9d8;font-weight:normal;border-left:1px solid #000;border-bottom:1px solid #000;border-top:1px solid #fff;line-height:19px"><span>L</span></div>
<div class="ch" style="left:814px;top:1px;width:64px;height:20px;background:#ece9d8;font-weight:normal;border-left:1px solid #000;border-bottom:1px solid #000;border-top:1px solid #fff;line-height:19px"><span>M</span></div>
<div class="ch" style="left:878px;top:1px;width:64px;height:20px;background:#ece9d8;font-weight:normal;border-left:1px solid #000;border-bottom:1px solid #000;border-top:1px solid #fff;line-height:19px"><span>N</span></div>
<div class="a" style="left:47px;top:3px;width:1px;height:17px;background:#d0c9a8"></div>
<div class="a" style="left:111px;top:3px;width:1px;height:17px;background:#fff"></div>
<div class="a" style="left:175px;top:3px;width:1px;height:17px;background:#fff"></div>
<div class="a" style="left:239px;top:3px;width:1px;height:17px;background:#fff"></div>
<div class="a" style="left:303px;top:3px;width:1px;height:17px;background:#fff"></div>
<div class="a" style="left:367px;top:3px;width:1px;height:17px;background:#fff"></div>
<div class="a" style="left:431px;top:3px;width:1px;height:17px;background:#fff"></div>
<div class="a" style="left:495px;top:3px;width:1px;height:17px;background:#fff"></div>
<div class="a" style="left:559px;top:3px;width:1px;height:17px;background:#fff"></div>
<div class="a" style="left:623px;top:3px;width:1px;height:17px;background:#fff"></div>
<div class="a" style="left:687px;top:3px;width:1px;height:17px;background:#fff"></div>
<div class="a" style="left:751px;top:3px;width:1px;height:17px;background:#fff"></div>
<div class="a" style="left:815px;top:3px;width:1px;height:17px;background:#fff"></div>
<div class="a" style="left:879px;top:3px;width:1px;height:17px;background:#fff"></div>
<div class="rh" style="left:1px;top:22px;width:45px;height:17px;background:#b9b08b;font-weight:bold;border-right:1px solid #000;border-bottom:1px solid #000;border-top:1px solid #d0c9a8;border-left:1px solid #d0c9a8;line-height:15px"><span>1</span></div>
<div class="rh" style="left:1px;top:39px;width:45px;height:17px;background:#ece9d8;font-weight:normal;border-right:1px solid #000;border-bottom:1px solid #000;border-top:1px solid #fff;border-left:1px solid #fff;line-height:15px"><span>2</span></div>
<div class="rh" style="left:1px;top:56px;width:45px;height:17px;background:#ece9d8;font-weight:normal;border-right:1px solid #000;border-bottom:1px solid #000;border-top:1px solid #fff;border-left:1px solid #fff;line-height:15px"><span>3</span></div>
<div class="rh" style="left:1px;top:73px;width:45px;height:17px;background:#ece9d8;font-weight:normal;border-right:1px solid #000;border-bottom:1px solid #000;border-top:1px solid #fff;border-left:1px solid #fff;line-height:15px"><span>4</span></div>
<div class="rh" style="left:1px;top:90px;width:45px;height:17px;background:#ece9d8;font-weight:normal;border-right:1px solid #000;border-bottom:1px solid #000;border-top:1px solid #fff;border-left:1px solid #fff;line-height:15px"><span>5</span></div>
<div class="rh" style="left:1px;top:107px;width:45px;height:17px;background:#ece9d8;font-weight:normal;border-right:1px solid #000;border-bottom:1px solid #000;border-top:1px solid #fff;border-left:1px solid #fff;line-height:15px"><span>6</span></div>
<div class="rh" style="left:1px;top:124px;width:45px;height:17px;background:#ece9d8;font-weight:normal;border-right:1px solid #000;border-bottom:1px solid #000;border-top:1px solid #fff;border-left:1px solid #fff;line-height:15px"><span>7</span></div>
<div class="rh" style="left:1px;top:141px;width:45px;height:17px;background:#ece9d8;font-weight:normal;border-right:1px solid #000;border-bottom:1px solid #000;border-top:1px solid #fff;border-left:1px solid #fff;line-height:15px"><span>8</span></div>
<div class="rh" style="left:1px;top:158px;width:45px;height:17px;background:#ece9d8;font-weight:normal;border-right:1px solid #000;border-bottom:1px solid #000;border-top:1px solid #fff;border-left:1px solid #fff;line-height:15px"><span>9</span></div>
<div class="rh" style="left:1px;top:175px;width:45px;height:17px;background:#ece9d8;font-weight:normal;border-right:1px solid #000;border-bottom:1px solid #000;border-top:1px solid #fff;border-left:1px solid #fff;line-height:15px"><span>10</span></div>
<div class="rh" style="left:1px;top:192px;width:45px;height:17px;background:#ece9d8;font-weight:normal;border-right:1px solid #000;border-bottom:1px solid #000;border-top:1px solid #fff;border-left:1px solid #fff;line-height:15px"><span>11</span></div>
<div class="rh" style="left:1px;top:209px;width:45px;height:17px;background:#ece9d8;font-weight:normal;border-right:1px solid #000;border-bottom:1px solid #000;border-top:1px solid #fff;border-left:1px solid #fff;line-height:15px"><span>12</span></div>
<div class="rh" style="left:1px;top:226px;width:45px;height:17px;background:#ece9d8;font-weight:normal;border-right:1px solid #000;border-bottom:1px solid #000;border-top:1px solid #fff;border-left:1px solid #fff;line-height:15px"><span>13</span></div>
<div class="rh" style="left:1px;top:243px;width:45px;height:17px;background:#ece9d8;font-weight:normal;border-right:1px solid #000;border-bottom:1px solid #000;border-top:1px solid #fff;border-left:1px solid #fff;line-height:15px"><span>14</span></div>
<div class="rh" style="left:1px;top:260px;width:45px;height:17px;background:#ece9d8;font-weight:normal;border-right:1px solid #000;border-bottom:1px solid #000;border-top:1px solid #fff;border-left:1px solid #fff;line-height:15px"><span>15</span></div>
<div class="rh" style="left:1px;top:277px;width:45px;height:17px;background:#ece9d8;font-weight:normal;border-right:1px solid #000;border-bottom:1px solid #000;border-top:1px solid #fff;border-left:1px solid #fff;line-height:15px"><span>16</span></div>
<div class="rh" style="left:1px;top:294px;width:45px;height:17px;background:#ece9d8;font-weight:normal;border-right:1px solid #000;border-bottom:1px solid #000;border-top:1px solid #fff;border-left:1px solid #fff;line-height:15px"><span>17</span></div>
<div class="rh" style="left:1px;top:311px;width:45px;height:17px;background:#ece9d8;font-weight:normal;border-right:1px solid #000;border-bottom:1px solid #000;border-top:1px solid #fff;border-left:1px solid #fff;line-height:15px"><span>18</span></div>
<div class="rh" style="left:1px;top:328px;width:45px;height:17px;background:#ece9d8;font-weight:normal;border-right:1px solid #000;border-bottom:1px solid #000;border-top:1px solid #fff;border-left:1px solid #fff;line-height:15px"><span>19</span></div>
<div class="rh" style="left:1px;top:345px;width:45px;height:17px;background:#ece9d8;font-weight:normal;border-right:1px solid #000;border-bottom:1px solid #000;border-top:1px solid #fff;border-left:1px solid #fff;line-height:15px"><span>20</span></div>
<div class="rh" style="left:1px;top:362px;width:45px;height:17px;background:#ece9d8;font-weight:normal;border-right:1px solid #000;border-bottom:1px solid #000;border-top:1px solid #fff;border-left:1px solid #fff;line-height:15px"><span>21</span></div>
<div class="rh" style="left:1px;top:379px;width:45px;height:17px;background:#ece9d8;font-weight:normal;border-right:1px solid #000;border-bottom:1px solid #000;border-top:1px solid #fff;border-left:1px solid #fff;line-height:15px"><span>22</span></div>
<div class="rh" style="left:1px;top:396px;width:45px;height:17px;background:#ece9d8;font-weight:normal;border-right:1px solid #000;border-bottom:1px solid #000;border-top:1px solid #fff;border-left:1px solid #fff;line-height:15px"><span>23</span></div>
<div class="rh" style="left:1px;top:413px;width:45px;height:17px;background:#ece9d8;font-weight:normal;border-right:1px solid #000;border-bottom:1px solid #000;border-top:1px solid #fff;border-left:1px solid #fff;line-height:15px"><span>24</span></div>
<div class="rh" style="left:1px;top:430px;width:45px;height:17px;background:#ece9d8;font-weight:normal;border-right:1px solid #000;border-bottom:1px solid #000;border-top:1px solid #fff;border-left:1px solid #fff;line-height:15px"><span>25</span></div>
<div class="rh" style="left:1px;top:447px;width:45px;height:17px;background:#ece9d8;font-weight:normal;border-right:1px solid #000;border-bottom:1px solid #000;border-top:1px solid #fff;border-left:1px solid #fff;line-height:15px"><span>26</span></div>
<div class="rh" style="left:1px;top:464px;width:45px;height:17px;background:#ece9d8;font-weight:normal;border-right:1px solid #000;border-bottom:1px solid #000;border-top:1px solid #fff;border-left:1px solid #fff;line-height:15px"><span>27</span></div>
<div class="rh" style="left:1px;top:481px;width:45px;height:17px;background:#ece9d8;font-weight:normal;border-right:1px solid #000;border-bottom:1px solid #000;border-top:1px solid #fff;border-left:1px solid #fff;line-height:15px"><span>28</span></div>
<div class="rh" style="left:1px;top:498px;width:45px;height:17px;background:#ece9d8;font-weight:normal;border-right:1px solid #000;border-bottom:1px solid #000;border-top:1px solid #fff;border-left:1px solid #fff;line-height:15px"><span>29</span></div>
<div class="rh" style="left:1px;top:515px;width:45px;height:17px;background:#ece9d8;font-weight:normal;border-right:1px solid #000;border-bottom:1px solid #000;border-top:1px solid #fff;border-left:1px solid #fff;line-height:15px"><span>30</span></div>
<div class="a" style="left:1px;top:21px;width:46px;height:1px;background:#000"></div>
<div class="a" style="left:0;top:0;width:942px;height:1px;background:#fbfaf6"></div>
<div class="a" style="left:0;top:0;width:1px;height:522px;background:#f7f6f0"></div>
<div class="a" style="left:2px;top:2px;width:43px;height:18px;border:1px solid #1c4fa0;border-radius:3px;background:linear-gradient(to bottom,#fff 0%,#f4f3ee 60%,#dcd8c8 100%)"></div>
<div class="cell" style="left:46px;top:22px;width:62px;height:16px;line-height:16px">1</div>
<div class="cell" style="left:110px;top:22px;width:62px;height:16px;line-height:16px">2</div>
<div class="cell" style="left:174px;top:22px;width:62px;height:16px;line-height:16px">4.6</div>
<div class="cell" style="left:46px;top:39px;width:62px;height:16px;line-height:16px">2</div>
<div class="cell" style="left:110px;top:39px;width:62px;height:16px;line-height:16px">4</div>
<div class="cell" style="left:174px;top:39px;width:62px;height:16px;line-height:16px">9.2</div>
<div class="cell" style="left:46px;top:56px;width:62px;height:16px;line-height:16px">3</div>
<div class="cell" style="left:110px;top:56px;width:62px;height:16px;line-height:16px">6</div>
<div class="cell" style="left:174px;top:56px;width:62px;height:16px;line-height:16px">13.8</div>
<div class="cell" style="left:46px;top:73px;width:62px;height:16px;line-height:16px">4</div>
<div class="cell" style="left:110px;top:73px;width:62px;height:16px;line-height:16px">8</div>
<div class="cell" style="left:174px;top:73px;width:62px;height:16px;line-height:16px">18.4</div>
<div class="cell" style="left:46px;top:90px;width:62px;height:16px;line-height:16px">5</div>
<div class="cell" style="left:110px;top:90px;width:62px;height:16px;line-height:16px">10</div>
<div class="cell" style="left:174px;top:90px;width:62px;height:16px;line-height:16px">23</div>
<div class="cell" style="left:46px;top:107px;width:62px;height:16px;line-height:16px">6</div>
<div class="cell" style="left:110px;top:107px;width:62px;height:16px;line-height:16px">12</div>
<div class="cell" style="left:174px;top:107px;width:62px;height:16px;line-height:16px">27.6</div>
<div class="cell" style="left:46px;top:124px;width:62px;height:16px;line-height:16px">7</div>
<div class="cell" style="left:110px;top:124px;width:62px;height:16px;line-height:16px">14</div>
<div class="cell" style="left:174px;top:124px;width:62px;height:16px;line-height:16px">32.2</div>
<div class="cell" style="left:46px;top:141px;width:62px;height:16px;line-height:16px">8</div>
<div class="cell" style="left:110px;top:141px;width:62px;height:16px;line-height:16px">16</div>
<div class="cell" style="left:174px;top:141px;width:62px;height:16px;line-height:16px">36.8</div>
<div class="cell" style="left:46px;top:158px;width:62px;height:16px;line-height:16px">9</div>
<div class="cell" style="left:110px;top:158px;width:62px;height:16px;line-height:16px">18</div>
<div class="cell" style="left:174px;top:158px;width:62px;height:16px;line-height:16px">41.4</div>
<div class="cell" style="left:46px;top:175px;width:62px;height:16px;line-height:16px">10</div>
<div class="cell" style="left:110px;top:175px;width:62px;height:16px;line-height:16px">20</div>
<div class="cell" style="left:174px;top:175px;width:62px;height:16px;line-height:16px">46</div>
<div class="cell" style="left:46px;top:192px;width:62px;height:16px;line-height:16px">11</div>
<div class="cell" style="left:110px;top:192px;width:62px;height:16px;line-height:16px">22</div>
<div class="cell" style="left:174px;top:192px;width:62px;height:16px;line-height:16px">50.6</div>
<div class="cell" style="left:46px;top:209px;width:62px;height:16px;line-height:16px">12</div>
<div class="cell" style="left:110px;top:209px;width:62px;height:16px;line-height:16px">24</div>
<div class="cell" style="left:174px;top:209px;width:62px;height:16px;line-height:16px">55.2</div>
<div class="cell" style="left:46px;top:226px;width:62px;height:16px;line-height:16px">13</div>
<div class="cell" style="left:110px;top:226px;width:62px;height:16px;line-height:16px">26</div>
<div class="cell" style="left:174px;top:226px;width:62px;height:16px;line-height:16px">59.8</div>
<div class="cell" style="left:46px;top:243px;width:62px;height:16px;line-height:16px">14</div>
<div class="cell" style="left:110px;top:243px;width:62px;height:16px;line-height:16px">28</div>
<div class="cell" style="left:174px;top:243px;width:62px;height:16px;line-height:16px">64.4</div>
<div class="cell" style="left:46px;top:260px;width:62px;height:16px;line-height:16px">15</div>
<div class="cell" style="left:110px;top:260px;width:62px;height:16px;line-height:16px">30</div>
<div class="cell" style="left:174px;top:260px;width:62px;height:16px;line-height:16px">69</div>
<div class="cell" style="left:46px;top:277px;width:62px;height:16px;line-height:16px">16</div>
<div class="cell" style="left:110px;top:277px;width:62px;height:16px;line-height:16px">32</div>
<div class="cell" style="left:174px;top:277px;width:62px;height:16px;line-height:16px">73.6</div>
<div class="cell" style="left:46px;top:294px;width:62px;height:16px;line-height:16px">17</div>
<div class="cell" style="left:110px;top:294px;width:62px;height:16px;line-height:16px">34</div>
<div class="cell" style="left:174px;top:294px;width:62px;height:16px;line-height:16px">78.2</div>
<div class="cell" style="left:46px;top:311px;width:62px;height:16px;line-height:16px">18</div>
<div class="cell" style="left:110px;top:311px;width:62px;height:16px;line-height:16px">36</div>
<div class="cell" style="left:174px;top:311px;width:62px;height:16px;line-height:16px">82.8</div>
<div class="cell" style="left:46px;top:328px;width:62px;height:16px;line-height:16px">19</div>
<div class="cell" style="left:110px;top:328px;width:62px;height:16px;line-height:16px">38</div>
<div class="cell" style="left:174px;top:328px;width:62px;height:16px;line-height:16px">87.4</div>
<div class="cell" style="left:46px;top:345px;width:62px;height:16px;line-height:16px">20</div>
<div class="cell" style="left:110px;top:345px;width:62px;height:16px;line-height:16px">40</div>
<div class="cell" style="left:174px;top:345px;width:62px;height:16px;line-height:16px">92</div>
<div class="cell" style="left:46px;top:362px;width:62px;height:16px;line-height:16px">21</div>
<div class="cell" style="left:110px;top:362px;width:62px;height:16px;line-height:16px">42</div>
<div class="cell" style="left:174px;top:362px;width:62px;height:16px;line-height:16px">96.6</div>
<div class="cell" style="left:46px;top:379px;width:62px;height:16px;line-height:16px">22</div>
<div class="cell" style="left:110px;top:379px;width:62px;height:16px;line-height:16px">44</div>
<div class="cell" style="left:174px;top:379px;width:62px;height:16px;line-height:16px">101.2</div>
<div class="cell" style="left:46px;top:396px;width:62px;height:16px;line-height:16px">23</div>
<div class="cell" style="left:110px;top:396px;width:62px;height:16px;line-height:16px">46</div>
<div class="cell" style="left:174px;top:396px;width:62px;height:16px;line-height:16px">105.8</div>
<div class="cell" style="left:46px;top:413px;width:62px;height:16px;line-height:16px">24</div>
<div class="cell" style="left:110px;top:413px;width:62px;height:16px;line-height:16px">48</div>
<div class="cell" style="left:174px;top:413px;width:62px;height:16px;line-height:16px">110.4</div>
<div class="cell" style="left:46px;top:430px;width:62px;height:16px;line-height:16px">25</div>
<div class="cell" style="left:110px;top:430px;width:62px;height:16px;line-height:16px">50</div>
<div class="cell" style="left:174px;top:430px;width:62px;height:16px;line-height:16px">115</div>
<div class="cell" style="left:46px;top:447px;width:62px;height:16px;line-height:16px">26</div>
<div class="cell" style="left:110px;top:447px;width:62px;height:16px;line-height:16px">52</div>
<div class="cell" style="left:174px;top:447px;width:62px;height:16px;line-height:16px">119.6</div>
<div class="cell" style="left:46px;top:464px;width:62px;height:16px;line-height:16px">27</div>
<div class="cell" style="left:110px;top:464px;width:62px;height:16px;line-height:16px">54</div>
<div class="cell" style="left:174px;top:464px;width:62px;height:16px;line-height:16px">124.2</div>
<div class="cell" style="left:46px;top:481px;width:62px;height:16px;line-height:16px">28</div>
<div class="cell" style="left:110px;top:481px;width:62px;height:16px;line-height:16px">56</div>
<div class="cell" style="left:174px;top:481px;width:62px;height:16px;line-height:16px">128.8</div>
<div class="cell" style="left:46px;top:498px;width:62px;height:16px;line-height:16px">29</div>
<div class="cell" style="left:110px;top:498px;width:62px;height:16px;line-height:16px">58</div>
<div class="cell" style="left:174px;top:498px;width:62px;height:16px;line-height:16px">133.4</div>
<div class="a" style="left:46px;top:21px;width:65px;height:18px;border:1px solid #000;box-shadow:inset 0 0 0 1px #fff, inset 0 0 0 2px #000"></div>
<div class="a" style="left:108px;top:36px;width:6px;height:6px;background:#fff"></div>
<div class="a" style="left:109px;top:37px;width:2px;height:2px;background:#000"></div>
<div class="a" style="left:112px;top:37px;width:2px;height:2px;background:#000"></div>
<div class="a" style="left:109px;top:40px;width:2px;height:2px;background:#000"></div>
<div class="a" style="left:112px;top:40px;width:2px;height:2px;background:#000"></div>
</div>
<div class="a" style="left:282px;top:197px;width:286px;height:290px;background:#fff;border:1px solid #000"></div>
<svg style="left:0;top:0" width="968" height="754" viewBox="0 0 968 754"><g stroke="#000" stroke-width="1.15" stroke-linejoin="miter">
<path fill="#9c9cff" stroke="none" d="M425.16 320.00L425.16 205.00A115.00 115.00 0 0 1 426.82 205.01Z"/>
<path fill="#9c3163" stroke="none" d="M425.64 320.01L427.30 205.02A115.00 115.00 0 0 1 430.62 205.12Z"/>
<path fill="#ffffce" stroke="none" d="M426.43 320.05L431.41 205.15A115.00 115.00 0 0 1 436.38 205.48Z"/>
<path fill="#ceffff" d="M427.54 320.15L437.49 205.58A115.00 115.00 0 0 1 444.09 206.34Z"/>
<path fill="#630063" d="M428.95 320.36L445.50 206.56A115.00 115.00 0 0 1 453.67 208.05Z"/>
<path fill="#ff8080" d="M430.66 320.74L455.38 208.43A115.00 115.00 0 0 1 465.01 210.99Z"/>
<path fill="#0063ce" d="M432.62 321.36L466.97 211.61A115.00 115.00 0 0 1 477.88 215.64Z"/>
<path fill="#ceceff" d="M434.81 322.31L480.06 216.59A115.00 115.00 0 0 1 491.95 222.51Z"/>
<path fill="#000080" d="M437.15 323.66L494.29 223.86A115.00 115.00 0 0 1 506.74 232.11Z"/>
<path fill="#ff00ff" d="M439.54 325.49L509.14 233.94A115.00 115.00 0 0 1 521.59 244.91Z"/>
<path fill="#ffff00" d="M441.87 327.88L523.92 247.30A115.00 115.00 0 0 1 535.63 261.30Z"/>
<path fill="#00ffff" d="M443.97 330.86L537.74 264.28A115.00 115.00 0 0 1 547.81 281.45Z"/>
<path fill="#800080" d="M445.66 334.45L549.51 285.04A115.00 115.00 0 0 1 556.91 305.29Z"/>
<path fill="#800000" d="M446.74 338.60L557.98 309.44A115.00 115.00 0 0 1 561.57 332.37Z"/>
<path fill="#008080" d="M446.97 343.19L561.80 336.97A115.00 115.00 0 0 1 560.45 361.80Z"/>
<path fill="#0000ff" d="M446.16 348.04L559.64 366.64A115.00 115.00 0 0 1 552.36 392.14Z"/>
<path fill="#00ceff" d="M444.13 352.86L550.34 396.97A115.00 115.00 0 0 1 536.43 421.46Z"/>
<path fill="#ceffff" d="M440.81 357.30L533.11 425.90A115.00 115.00 0 0 1 512.37 447.32Z"/>
<path fill="#ceffce" d="M436.21 360.93L507.77 450.95A115.00 115.00 0 0 1 480.69 466.98Z"/>
<path fill="#ffff9c" d="M430.50 363.30L474.99 469.35A115.00 115.00 0 0 1 442.94 477.63Z"/>
<path fill="#9cceff" d="M424.05 363.98L436.48 478.31A115.00 115.00 0 0 1 401.76 476.80Z"/>
<path fill="#ff9cce" d="M417.38 362.64L395.09 475.46A115.00 115.00 0 0 1 360.96 462.85Z"/>
<path fill="#ce9cff" d="M411.19 359.12L354.77 459.33A115.00 115.00 0 0 1 325.17 435.45Z"/>
<path fill="#ffce9c" d="M406.27 353.55L320.26 429.88A115.00 115.00 0 0 1 299.44 396.11Z"/>
<path fill="#3163ff" d="M403.43 346.34L296.60 388.91A115.00 115.00 0 0 1 288.45 348.42Z"/>
<path fill="#31cece" d="M403.32 338.28L288.33 340.36A115.00 115.00 0 0 1 295.59 298.04Z"/>
<path fill="#9cce00" d="M406.27 330.45L298.54 290.21A115.00 115.00 0 0 1 321.93 252.28Z"/>
<path fill="#ffce00" d="M412.20 324.11L327.86 245.93A115.00 115.00 0 0 1 365.42 219.05Z"/>
<path fill="#ff9c00" d="M420.43 320.48L373.65 215.42A115.00 115.00 0 0 1 420.43 205.48Z"/>
</g></svg>
<div class="a" style="left:641px;top:302px;width:276px;height:332px;background:#fff;border:1px solid #000"></div>
<svg style="left:0;top:0" width="968" height="754" viewBox="0 0 968 754"><g stroke="#000" stroke-width="1.15" stroke-linejoin="miter">
<path fill="#9c9cff" stroke="none" d="M778.90 394.45A73.35 73.35 0 0 1 779.96 394.46L779.69 412.96A54.85 54.85 0 0 0 778.90 412.95Z"/>
<path fill="#9c3163" stroke="none" d="M779.96 394.46A73.35 73.35 0 0 1 782.08 394.52L781.28 413.00A54.85 54.85 0 0 0 779.69 412.96Z"/>
<path fill="#ffffce" stroke="none" d="M782.08 394.52A73.35 73.35 0 0 1 785.25 394.73L783.65 413.16A54.85 54.85 0 0 0 781.28 413.00Z"/>
<path fill="#ceffff" stroke="none" d="M785.25 394.73A73.35 73.35 0 0 1 789.46 395.21L786.80 413.52A54.85 54.85 0 0 0 783.65 413.16Z"/>
<path fill="#630063" stroke="none" d="M789.46 395.21A73.35 73.35 0 0 1 794.67 396.16L790.69 414.23A54.85 54.85 0 0 0 786.80 413.52Z"/>
<path fill="#ff8080" stroke="none" d="M794.67 396.16A73.35 73.35 0 0 1 800.81 397.80L795.28 415.45A54.85 54.85 0 0 0 790.69 414.23Z"/>
<path fill="#0063ce" d="M800.81 397.80A73.35 73.35 0 0 1 807.76 400.37L800.48 417.38A54.85 54.85 0 0 0 795.28 415.45Z"/>
<path fill="#ceceff" d="M807.76 400.37A73.35 73.35 0 0 1 815.35 404.15L806.15 420.20A54.85 54.85 0 0 0 800.48 417.38Z"/>
<path fill="#000080" d="M815.35 404.15A73.35 73.35 0 0 1 823.29 409.41L812.09 424.13A54.85 54.85 0 0 0 806.15 420.20Z"/>
<path fill="#ff00ff" d="M823.29 409.41A73.35 73.35 0 0 1 831.23 416.40L818.03 429.37A54.85 54.85 0 0 0 812.09 424.13Z"/>
<path fill="#ffff00" d="M831.23 416.40A73.35 73.35 0 0 1 838.70 425.33L823.62 436.04A54.85 54.85 0 0 0 818.03 429.37Z"/>
<path fill="#00ffff" d="M838.70 425.33A73.35 73.35 0 0 1 845.13 436.28L828.43 444.23A54.85 54.85 0 0 0 823.62 436.04Z"/>
<path fill="#800080" d="M845.13 436.28A73.35 73.35 0 0 1 849.85 449.20L831.96 453.89A54.85 54.85 0 0 0 828.43 444.23Z"/>
<path fill="#800000" d="M849.85 449.20A73.35 73.35 0 0 1 852.14 463.83L833.67 464.83A54.85 54.85 0 0 0 831.96 453.89Z"/>
<path fill="#008080" d="M852.14 463.83A73.35 73.35 0 0 1 851.28 479.67L833.03 476.67A54.85 54.85 0 0 0 833.67 464.83Z"/>
<path fill="#0000ff" d="M851.28 479.67A73.35 73.35 0 0 1 846.64 495.93L829.56 488.84A54.85 54.85 0 0 0 833.03 476.67Z"/>
<path fill="#00ceff" d="M846.64 495.93A73.35 73.35 0 0 1 837.77 511.55L822.92 500.52A54.85 54.85 0 0 0 829.56 488.84Z"/>
<path fill="#ceffff" d="M837.77 511.55A73.35 73.35 0 0 1 824.54 525.22L813.03 510.74A54.85 54.85 0 0 0 822.92 500.52Z"/>
<path fill="#ceffce" d="M824.54 525.22A73.35 73.35 0 0 1 807.28 535.44L800.12 518.38A54.85 54.85 0 0 0 813.03 510.74Z"/>
<path fill="#ffff9c" d="M807.28 535.44A73.35 73.35 0 0 1 786.83 540.72L784.83 522.33A54.85 54.85 0 0 0 800.12 518.38Z"/>
<path fill="#9cceff" d="M786.83 540.72A73.35 73.35 0 0 1 764.69 539.76L768.27 521.61A54.85 54.85 0 0 0 784.83 522.33Z"/>
<path fill="#ff9cce" d="M764.69 539.76A73.35 73.35 0 0 1 742.92 531.72L751.99 515.60A54.85 54.85 0 0 0 768.27 521.61Z"/>
<path fill="#ce9cff" d="M742.92 531.72A73.35 73.35 0 0 1 724.04 516.49L737.87 504.21A54.85 54.85 0 0 0 751.99 515.60Z"/>
<path fill="#ffce9c" d="M724.04 516.49A73.35 73.35 0 0 1 710.76 494.95L727.95 488.10A54.85 54.85 0 0 0 737.87 504.21Z"/>
<path fill="#3163ff" d="M710.76 494.95A73.35 73.35 0 0 1 705.56 469.12L724.06 468.79A54.85 54.85 0 0 0 727.95 488.10Z"/>
<path fill="#31cece" d="M705.56 469.12A73.35 73.35 0 0 1 710.19 442.13L727.52 448.61A54.85 54.85 0 0 0 724.06 468.79Z"/>
<path fill="#9cce00" d="M710.19 442.13A73.35 73.35 0 0 1 725.10 417.94L738.67 430.51A54.85 54.85 0 0 0 727.52 448.61Z"/>
<path fill="#ffce00" d="M725.10 417.94A73.35 73.35 0 0 1 749.07 400.79L756.59 417.69A54.85 54.85 0 0 0 738.67 430.51Z"/>
<path fill="#ff9c00" d="M749.07 400.79A73.35 73.35 0 0 1 778.90 394.45L778.90 412.95A54.85 54.85 0 0 0 756.59 417.69Z"/>
<path fill="#9c9cff" stroke="none" d="M778.90 375.95A91.85 91.85 0 0 1 780.23 375.96L779.96 394.46A73.35 73.35 0 0 0 778.90 394.45Z"/>
<path fill="#9c3163" stroke="none" d="M780.23 375.96A91.85 91.85 0 0 1 782.88 376.04L782.08 394.52A73.35 73.35 0 0 0 779.96 394.46Z"/>
<path fill="#ffffce" stroke="none" d="M782.88 376.04A91.85 91.85 0 0 1 786.85 376.29L785.25 394.73A73.35 73.35 0 0 0 782.08 394.52Z"/>
<path fill="#ceffff" stroke="none" d="M786.85 376.29A91.85 91.85 0 0 1 792.12 376.91L789.46 395.21A73.35 73.35 0 0 0 785.25 394.73Z"/>
<path fill="#630063" stroke="none" d="M792.12 376.91A91.85 91.85 0 0 1 798.65 378.10L794.67 396.16A73.35 73.35 0 0 0 789.46 395.21Z"/>
<path fill="#ff8080" stroke="none" d="M798.65 378.10A91.85 91.85 0 0 1 806.34 380.14L800.81 397.80A73.35 73.35 0 0 0 794.67 396.16Z"/>
<path fill="#0063ce" d="M806.34 380.14A91.85 91.85 0 0 1 815.04 383.36L807.76 400.37A73.35 73.35 0 0 0 800.81 397.80Z"/>
<path fill="#ceceff" d="M815.04 383.36A91.85 91.85 0 0 1 824.54 388.09L815.35 404.15A73.35 73.35 0 0 0 807.76 400.37Z"/>
<path fill="#000080" d="M824.54 388.09A91.85 91.85 0 0 1 834.49 394.68L823.29 409.41A73.35 73.35 0 0 0 815.35 404.15Z"/>
<path fill="#ff00ff" d="M834.49 394.68A91.85 91.85 0 0 1 844.43 403.44L831.23 416.40A73.35 73.35 0 0 0 823.29 409.41Z"/>
<path fill="#ffff00" d="M844.43 403.44A91.85 91.85 0 0 1 853.79 414.62L838.70 425.33A73.35 73.35 0 0 0 831.23 416.40Z"/>
<path fill="#00ffff" d="M853.79 414.62A91.85 91.85 0 0 1 861.84 428.33L845.13 436.28A73.35 73.35 0 0 0 838.70 425.33Z"/>
<path fill="#800080" d="M861.84 428.33A91.85 91.85 0 0 1 867.75 444.51L849.85 449.20A73.35 73.35 0 0 0 845.13 436.28Z"/>
<path fill="#800000" d="M867.75 444.51A91.85 91.85 0 0 1 870.62 462.83L852.14 463.83A73.35 73.35 0 0 0 849.85 449.20Z"/>
<path fill="#008080" d="M870.62 462.83A91.85 91.85 0 0 1 869.54 482.66L851.28 479.67A73.35 73.35 0 0 0 852.14 463.83Z"/>
<path fill="#0000ff" d="M869.54 482.66A91.85 91.85 0 0 1 863.73 503.03L846.64 495.93A73.35 73.35 0 0 0 851.28 479.67Z"/>
<path fill="#00ceff" d="M863.73 503.03A91.85 91.85 0 0 1 852.62 522.59L837.77 511.55A73.35 73.35 0 0 0 846.64 495.93Z"/>
<path fill="#ceffff" d="M852.62 522.59A91.85 91.85 0 0 1 836.06 539.70L824.54 525.22A73.35 73.35 0 0 0 837.77 511.55Z"/>
<path fill="#ceffce" d="M836.06 539.70A91.85 91.85 0 0 1 814.43 552.50L807.28 535.44A73.35 73.35 0 0 0 824.54 525.22Z"/>
<path fill="#ffff9c" d="M814.43 552.50A91.85 91.85 0 0 1 788.83 559.11L786.83 540.72A73.35 73.35 0 0 0 807.28 535.44Z"/>
<path fill="#9cceff" d="M788.83 559.11A91.85 91.85 0 0 1 761.10 557.91L764.69 539.76A73.35 73.35 0 0 0 786.83 540.72Z"/>
<path fill="#ff9cce" d="M761.10 557.91A91.85 91.85 0 0 1 733.84 547.84L742.92 531.72A73.35 73.35 0 0 0 764.69 539.76Z"/>
<path fill="#ce9cff" d="M733.84 547.84A91.85 91.85 0 0 1 710.20 528.77L724.04 516.49A73.35 73.35 0 0 0 742.92 531.72Z"/>
<path fill="#ffce9c" d="M710.20 528.77A91.85 91.85 0 0 1 693.57 501.80L710.76 494.95A73.35 73.35 0 0 0 724.04 516.49Z"/>
<path fill="#3163ff" d="M693.57 501.80A91.85 91.85 0 0 1 687.06 469.46L705.56 469.12A73.35 73.35 0 0 0 710.76 494.95Z"/>
<path fill="#31cece" d="M687.06 469.46A91.85 91.85 0 0 1 692.86 435.66L710.19 442.13A73.35 73.35 0 0 0 705.56 469.12Z"/>
<path fill="#9cce00" d="M692.86 435.66A91.85 91.85 0 0 1 711.54 405.36L725.10 417.94A73.35 73.35 0 0 0 710.19 442.13Z"/>
<path fill="#ffce00" d="M711.54 405.36A91.85 91.85 0 0 1 741.54 383.89L749.07 400.79A73.35 73.35 0 0 0 725.10 417.94Z"/>
<path fill="#ff9c00" d="M741.54 383.89A91.85 91.85 0 0 1 778.90 375.95L778.90 394.45A73.35 73.35 0 0 0 749.07 400.79Z"/>
<path fill="#9c9cff" stroke="none" d="M779.06 335.85A110.35 110.35 0 0 1 780.65 335.86L780.38 354.36A91.85 91.85 0 0 0 779.06 354.35Z"/>
<path fill="#9c3163" stroke="none" d="M781.12 335.87A110.35 110.35 0 0 1 784.30 335.96L783.50 354.45A91.85 91.85 0 0 0 780.85 354.37Z"/>
<path fill="#ffffce" stroke="none" d="M785.08 336.00A110.35 110.35 0 0 1 789.85 336.31L788.25 354.74A91.85 91.85 0 0 0 784.28 354.48Z"/>
<path fill="#ceffff" stroke="none" d="M790.94 336.41A110.35 110.35 0 0 1 797.27 337.14L794.61 355.45A91.85 91.85 0 0 0 789.34 354.84Z"/>
<path fill="#630063" stroke="none" d="M798.66 337.35A110.35 110.35 0 0 1 806.50 338.78L802.52 356.85A91.85 91.85 0 0 0 796.00 355.66Z"/>
<path fill="#ff8080" stroke="none" d="M808.17 339.16A110.35 110.35 0 0 1 817.41 341.61L811.89 359.27A91.85 91.85 0 0 0 804.20 357.22Z"/>
<path fill="#0063ce" d="M819.35 342.23A110.35 110.35 0 0 1 829.81 346.09L822.53 363.10A91.85 91.85 0 0 0 813.82 359.88Z"/>
<path fill="#ceceff" d="M831.95 347.02A110.35 110.35 0 0 1 843.36 352.70L834.17 368.76A91.85 91.85 0 0 0 824.67 364.03Z"/>
<path fill="#000080" d="M845.66 354.03A110.35 110.35 0 0 1 857.61 361.94L846.41 376.67A91.85 91.85 0 0 0 836.46 370.08Z"/>
<path fill="#ff00ff" d="M859.96 363.74A110.35 110.35 0 0 1 871.91 374.27L858.71 387.23A91.85 91.85 0 0 0 848.76 378.47Z"/>
<path fill="#ffff00" d="M874.19 376.61A110.35 110.35 0 0 1 885.44 390.04L870.35 400.76A91.85 91.85 0 0 0 860.99 389.58Z"/>
<path fill="#00ffff" d="M887.50 392.97A110.35 110.35 0 0 1 897.17 409.45L880.47 417.40A91.85 91.85 0 0 0 872.42 403.69Z"/>
<path fill="#800080" d="M898.83 412.97A110.35 110.35 0 0 1 905.93 432.41L888.04 437.10A91.85 91.85 0 0 0 882.13 420.92Z"/>
<path fill="#800000" d="M906.98 436.48A110.35 110.35 0 0 1 910.43 458.49L891.96 459.49A91.85 91.85 0 0 0 889.09 441.17Z"/>
<path fill="#008080" d="M910.66 463.00A110.35 110.35 0 0 1 909.36 486.82L891.11 483.83A91.85 91.85 0 0 0 892.18 464.00Z"/>
<path fill="#0000ff" d="M908.57 491.58A110.35 110.35 0 0 1 901.58 516.05L884.50 508.95A91.85 91.85 0 0 0 890.31 488.59Z"/>
<path fill="#00ceff" d="M899.60 520.79A110.35 110.35 0 0 1 886.25 544.29L871.40 533.25A91.85 91.85 0 0 0 882.51 513.69Z"/>
<path fill="#ceffff" d="M882.99 548.65A110.35 110.35 0 0 1 863.09 569.20L851.58 554.72A91.85 91.85 0 0 0 868.14 537.61Z"/>
<path fill="#ceffce" d="M858.57 572.77A110.35 110.35 0 0 1 832.59 588.15L825.43 571.09A91.85 91.85 0 0 0 847.06 558.29Z"/>
<path fill="#ffff9c" d="M826.99 590.47A110.35 110.35 0 0 1 796.23 598.42L794.23 580.03A91.85 91.85 0 0 0 819.83 573.41Z"/>
<path fill="#9cceff" d="M789.90 599.08A110.35 110.35 0 0 1 756.58 597.64L760.17 579.49A91.85 91.85 0 0 0 787.90 580.69Z"/>
<path fill="#ff9cce" d="M750.03 596.32A110.35 110.35 0 0 1 717.28 584.22L726.35 568.10A91.85 91.85 0 0 0 753.62 578.17Z"/>
<path fill="#ce9cff" d="M711.20 580.77A110.35 110.35 0 0 1 682.80 557.86L696.64 545.58A91.85 91.85 0 0 0 720.28 564.65Z"/>
<path fill="#ffce9c" d="M677.98 552.38A110.35 110.35 0 0 1 658.00 519.98L675.19 513.13A91.85 91.85 0 0 0 691.81 540.10Z"/>
<path fill="#3163ff" d="M655.21 512.91A110.35 110.35 0 0 1 647.39 474.05L665.89 473.72A91.85 91.85 0 0 0 672.40 506.06Z"/>
<path fill="#31cece" d="M647.28 466.14A110.35 110.35 0 0 1 654.24 425.54L671.57 432.01A91.85 91.85 0 0 0 665.78 465.81Z"/>
<path fill="#9cce00" d="M657.14 417.85A110.35 110.35 0 0 1 679.58 381.45L693.15 394.03A91.85 91.85 0 0 0 674.47 424.32Z"/>
<path fill="#ffce00" d="M685.40 375.22A110.35 110.35 0 0 1 721.45 349.42L728.97 366.32A91.85 91.85 0 0 0 698.97 387.79Z"/>
<path fill="#ff9c00" d="M729.53 345.86A110.35 110.35 0 0 1 774.41 336.32L774.41 354.82A91.85 91.85 0 0 0 737.05 362.76Z"/>
</g></svg>
<div class="a" style="left:946px;top:162px;width:17px;height:522px;background:linear-gradient(to right,#f3f1ec,#fefefb)"></div>
<div class="a" style="left:947px;top:164px;width:14px;height:15px;border:1px solid #fff;border-radius:2px;box-shadow:0 0 0 1px rgba(181,198,238,.35);background:linear-gradient(135deg,#d3dffe 0%,#c3d3fb 45%,#b5c8f6 100%)"><svg style="left:2px;top:2px" width="9" height="9" viewBox="0 0 9 9"><path d="M1 6L4.5 2L8 6" fill="none" stroke="#4d6185" stroke-width="2"/></svg></div>
<div class="a" style="left:947px;top:668px;width:14px;height:16px;border:1px solid #fff;border-radius:2px;box-shadow:0 0 0 1px rgba(181,198,238,.35);background:linear-gradient(135deg,#d3dffe 0%,#c3d3fb 45%,#b5c8f6 100%)"><svg style="left:2px;top:2px" width="9" height="9" viewBox="0 0 9 9"><path d="M1 3L4.5 7L8 3" fill="none" stroke="#4d6185" stroke-width="2"/></svg></div>
<div class="a" style="left:947px;top:180px;width:14px;height:487px;border:1px solid #fff;border-radius:2px;box-shadow:0 0 0 1px rgba(181,198,238,.35);background:linear-gradient(to right,#c9d8fd 0%,#c1d2fb 50%,#b3c6f5 100%)"></div>
<div class="a" style="left:5px;top:684px;width:942px;height:18px;background:linear-gradient(to bottom,#f1efe8,#fdfdfa)"></div>
<div class="a" style="left:946px;top:684px;width:17px;height:18px;background:#ece9d8"></div>
<div class="a" style="left:7px;top:685px;width:14px;height:15px;border:1px solid #fff;border-radius:2px;box-shadow:0 0 0 1px rgba(181,198,238,.35);background:linear-gradient(135deg,#d3dffe 0%,#c3d3fb 45%,#b5c8f6 100%)"><svg style="left:1px;top:2px" width="9" height="9" viewBox="0 0 9 9"><path d="M6 1L2 4.5L6 8" fill="none" stroke="#4d6185" stroke-width="2"/></svg></div>
<div class="a" style="left:929px;top:685px;width:15px;height:15px;border:1px solid #fff;border-radius:2px;box-shadow:0 0 0 1px rgba(181,198,238,.35);background:linear-gradient(135deg,#d3dffe 0%,#c3d3fb 45%,#b5c8f6 100%)"><svg style="left:2px;top:2px" width="9" height="9" viewBox="0 0 9 9"><path d="M3 1L7 4.5L3 8" fill="none" stroke="#4d6185" stroke-width="2"/></svg></div>
<div class="a" style="left:24px;top:685px;width:838px;height:15px;border:1px solid #fff;border-radius:2px;box-shadow:0 0 0 1px rgba(181,198,238,.35);background:linear-gradient(to bottom,#c9d8fd 0%,#c1d2fb 50%,#b3c6f5 100%)"></div>
<div class="a" style="left:439px;top:689px;width:8px;height:7px;background-image:repeating-linear-gradient(to right,#eef3ff 0,#eef3ff 1px,#8ca3d8 1px,#8ca3d8 2px)"></div>
<div class="a" style="left:963px;top:161px;width:1px;height:542px;background:#000"></div>
<div class="a" style="left:50px;top:702px;width:914px;height:1px;background:#000"></div>
<div class="a" style="left:4px;top:703px;width:960px;height:24px;background:#ece9d8"></div>
<div class="a" style="left:50px;top:703px;width:43px;height:22px;background:#ece9d8;border-right:1px solid #919b9c;border-bottom:1px solid #d4d0c0;border-radius:0 2px 0 0"><span class="a" style="left:2px;top:4px">Sheet2</span></div>
<div class="a" style="left:93px;top:703px;width:43px;height:22px;background:#ece9d8;border-right:1px solid #919b9c;border-bottom:1px solid #d4d0c0;border-radius:0 2px 0 0"><span class="a" style="left:3px;top:4px">Sheet3</span></div>
<div class="a" style="left:4px;top:703px;width:46px;height:24px;background:#fff;border:1px solid #919b9c;border-bottom:none;border-top:2px solid #ffa52b;border-radius:3px 3px 0 0"><span class="a" style="left:3px;top:3px">Sheet1</span></div>
<div class="a" style="left:4px;top:727px;width:960px;height:23px;background:#ece9d8"></div>
<div class="a" style="left:4px;top:727px;width:562px;height:23px;background:#fff;border-top:1px solid #000;border-left:1px solid #808080;border-right:1px solid #a0a0a0;border-radius:3px 3px 0 0"></div>
<div class="a" style="left:569px;top:727px;width:198px;height:23px;border-top:1px solid #000;border-left:1px solid #000"><span class="a" style="left:0;top:5px;width:196px;text-align:center">Sum=1</span></div>
<div class="a" style="left:770px;top:727px;width:194px;height:23px;border-top:1px solid #000;border-left:1px solid #000"></div>
<svg style="left:951px;top:737px" width="12" height="12" viewBox="0 0 12 12"><rect x="8" y="0" width="2" height="2" fill="#b8b4a2"/><rect x="10" y="2" width="1" height="1" fill="#fff"/><rect x="4" y="4" width="2" height="2" fill="#b8b4a2"/><rect x="6" y="6" width="1" height="1" fill="#fff"/><rect x="8" y="4" width="2" height="2" fill="#b8b4a2"/><rect x="10" y="6" width="1" height="1" fill="#fff"/><rect x="0" y="8" width="2" height="2" fill="#b8b4a2"/><rect x="2" y="10" width="1" height="1" fill="#fff"/><rect x="4" y="8" width="2" height="2" fill="#b8b4a2"/><rect x="6" y="10" width="1" height="1" fill="#fff"/><rect x="8" y="8" width="2" height="2" fill="#b8b4a2"/><rect x="10" y="10" width="1" height="1" fill="#fff"/></svg>
</body></html>
